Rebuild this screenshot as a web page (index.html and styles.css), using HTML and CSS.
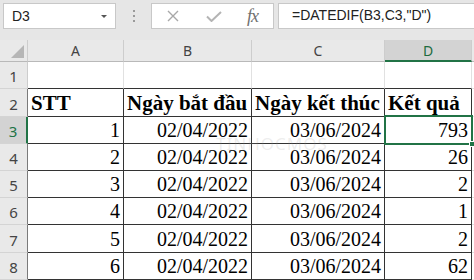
FILE: index.html
```html
<!DOCTYPE html>
<html lang="vi">
<head>
<meta charset="utf-8">
<title>DATEDIF</title>
<link rel="stylesheet" href="styles.css">
</head>
<body>
<div class="bar">
  <div class="namebox"><span>D3</span><span class="drop"></span></div>
  <div class="grip"><i></i><i></i><i></i></div>
  <div class="fxbox">
    <svg class="ico-x" width="12" height="12" viewBox="0 0 12 12"><path d="M1 1L11 11M11 1L1 11" stroke="#a8a8a8" stroke-width="1.4" fill="none"/></svg>
    <svg class="ico-ok" width="16" height="11" viewBox="0 0 16 11"><path d="M1 5.5L5.5 10L15 1" stroke="#b4b4b4" stroke-width="2" fill="none"/></svg>
    <span class="fx">fx</span>
  </div>
  <div class="formula">=DATEDIF(B3,C3,"D")</div>
</div>

<div class="sheet">
  <div class="ch corner"><span class="tri"></span></div>
  <div class="ch">A</div>
  <div class="ch">B</div>
  <div class="ch">C</div>
  <div class="ch act">D</div>
  <div class="ch"></div>

  <div class="rh">1</div>
  <div class="c top"></div>
  <div class="c top"></div>
  <div class="c top"></div>
  <div class="c top"></div>
  <div class="c"></div>

  <div class="rh edge">2</div>
  <div class="c t hd">STT</div>
  <div class="c t hd">Ngày bắt đầu</div>
  <div class="c t hd">Ngày kết thúc</div>
  <div class="c t hd">Kết quả</div>
  <div class="c"></div>

  <div class="rh edge on">3</div>
  <div class="c t num">1</div>
  <div class="c t num">02/04/2022</div>
  <div class="c t num">03/06/2024</div>
  <div class="c t num">793</div>
  <div class="c"></div>

  <div class="rh edge">4</div>
  <div class="c t num">2</div>
  <div class="c t num">02/04/2022</div>
  <div class="c t num">03/06/2024</div>
  <div class="c t num">26</div>
  <div class="c"></div>

  <div class="rh edge">5</div>
  <div class="c t num">3</div>
  <div class="c t num">02/04/2022</div>
  <div class="c t num">03/06/2024</div>
  <div class="c t num">2</div>
  <div class="c"></div>

  <div class="rh edge">6</div>
  <div class="c t num">4</div>
  <div class="c t num">02/04/2022</div>
  <div class="c t num">03/06/2024</div>
  <div class="c t num">1</div>
  <div class="c"></div>

  <div class="rh edge">7</div>
  <div class="c t num">5</div>
  <div class="c t num">02/04/2022</div>
  <div class="c t num">03/06/2024</div>
  <div class="c t num">2</div>
  <div class="c"></div>

  <div class="rh edge">8</div>
  <div class="c t num">6</div>
  <div class="c t num">02/04/2022</div>
  <div class="c t num">03/06/2024</div>
  <div class="c t num">62</div>
  <div class="c"></div>

  <div class="sel"><span class="handle"></span></div>
  <div class="mark" aria-hidden="true">TINHOCMOS</div>
</div>
</body>
</html>
```

FILE: styles.css
```css
* {margin:0; padding:0; box-sizing:border-box;}
body {background:#e6e6e6; font-family:"Liberation Sans",Arial,sans-serif; overflow:hidden;}

/* formula bar */
.bar {display:flex; align-items:flex-start; height:40px; padding:3px 0 0 3px;}
.namebox {display:flex; align-items:center; justify-content:space-between; width:113px; height:26px; padding:0 8px 0 8px; background:#fff; border:1px solid #c8c8c8; font-size:14px; color:#222;}
.drop {width:0; height:0; border-left:3px solid transparent; border-right:3px solid transparent; border-top:3px solid #555;}
.grip {display:flex; flex-direction:column; align-items:center; gap:3px; width:35px; padding-top:7px;}
.grip i {display:block; width:2px; height:2px; background:#9a9a9a;}
.fxbox {display:flex; align-items:center; width:123px; height:26px; background:#fff; border:1px solid #c8c8c8;}
.ico-x {margin-left:15px;}
.ico-ok {margin-left:27px;}
.fx {margin-left:25px; font-family:"Liberation Serif",serif; font-style:italic; font-size:18px; color:#707070; letter-spacing:-1px;}
.formula {flex:1; height:26px; margin-left:4px; padding:3px 0 0 13px; background:#fff; border:1px solid #c8c8c8; border-right:0; font-size:14px; color:#222;}

/* grid */
.sheet {position:relative; display:grid; grid-template-columns:28px 96px 128px 133px 87px 1fr; grid-template-rows:22px 27px 28px 27px 27px 27px 27px 28px 27px; background:#fff;}
.ch {display:flex; align-items:center; justify-content:center; background:#e9e9e9; border-right:1px solid #cdcdcd; border-bottom:1px solid #b9b9b9; font-family:"Noto Sans",sans-serif; font-size:14px; color:#444;}
.ch.act {background:#d3d3d3; color:#1e6b40; border-bottom:2px solid #217346;}
.corner {position:relative; border-right:1px solid #cdcdcd;}
.tri {position:absolute; right:3px; bottom:3px; width:0; height:0; border-left:13px solid transparent; border-bottom:13px solid #b6b6b6;}
.rh {display:flex; align-items:center; justify-content:center; padding-top:2px; background:#e9e9e9; border-right:1px solid #cdcdcd; border-bottom:1px solid #d4d4d4; font-family:"Noto Sans",sans-serif; font-size:15px; color:#444;}
.rh.edge {border-right-color:#7a7a7a;}
.rh.on {background:#d3d3d3; color:#217346; border-right:2px solid #217346;}

.c {display:flex; align-items:flex-end; overflow:hidden; white-space:nowrap; border-right:1px solid #e1e1e1; border-bottom:1px solid #e1e1e1; font-family:"Liberation Serif","Times New Roman",serif; font-size:20px; line-height:20px; color:#000; padding:0 3px 3px 3px;}
.c.top {border-bottom-color:#333;}
.c.t {border-right-color:#333; border-bottom-color:#333;}
.c.hd {font-weight:bold; font-size:21px; padding-left:3px;}
.c.num {justify-content:flex-end;}

.sel {position:absolute; grid-area:4 / 5 / 5 / 6; top:-2px; left:-1px; right:-1px; bottom:-1px; border:2px solid #217346;}
.handle {position:absolute; right:-4px; bottom:-4px; width:6px; height:6px; background:#217346; border:1px solid #fff;}
.mark {position:absolute; left:216px; top:92px; font-family:"Noto Sans",sans-serif; font-size:17px; letter-spacing:1px; color:rgba(150,150,150,0.18); pointer-events:none;}
```
